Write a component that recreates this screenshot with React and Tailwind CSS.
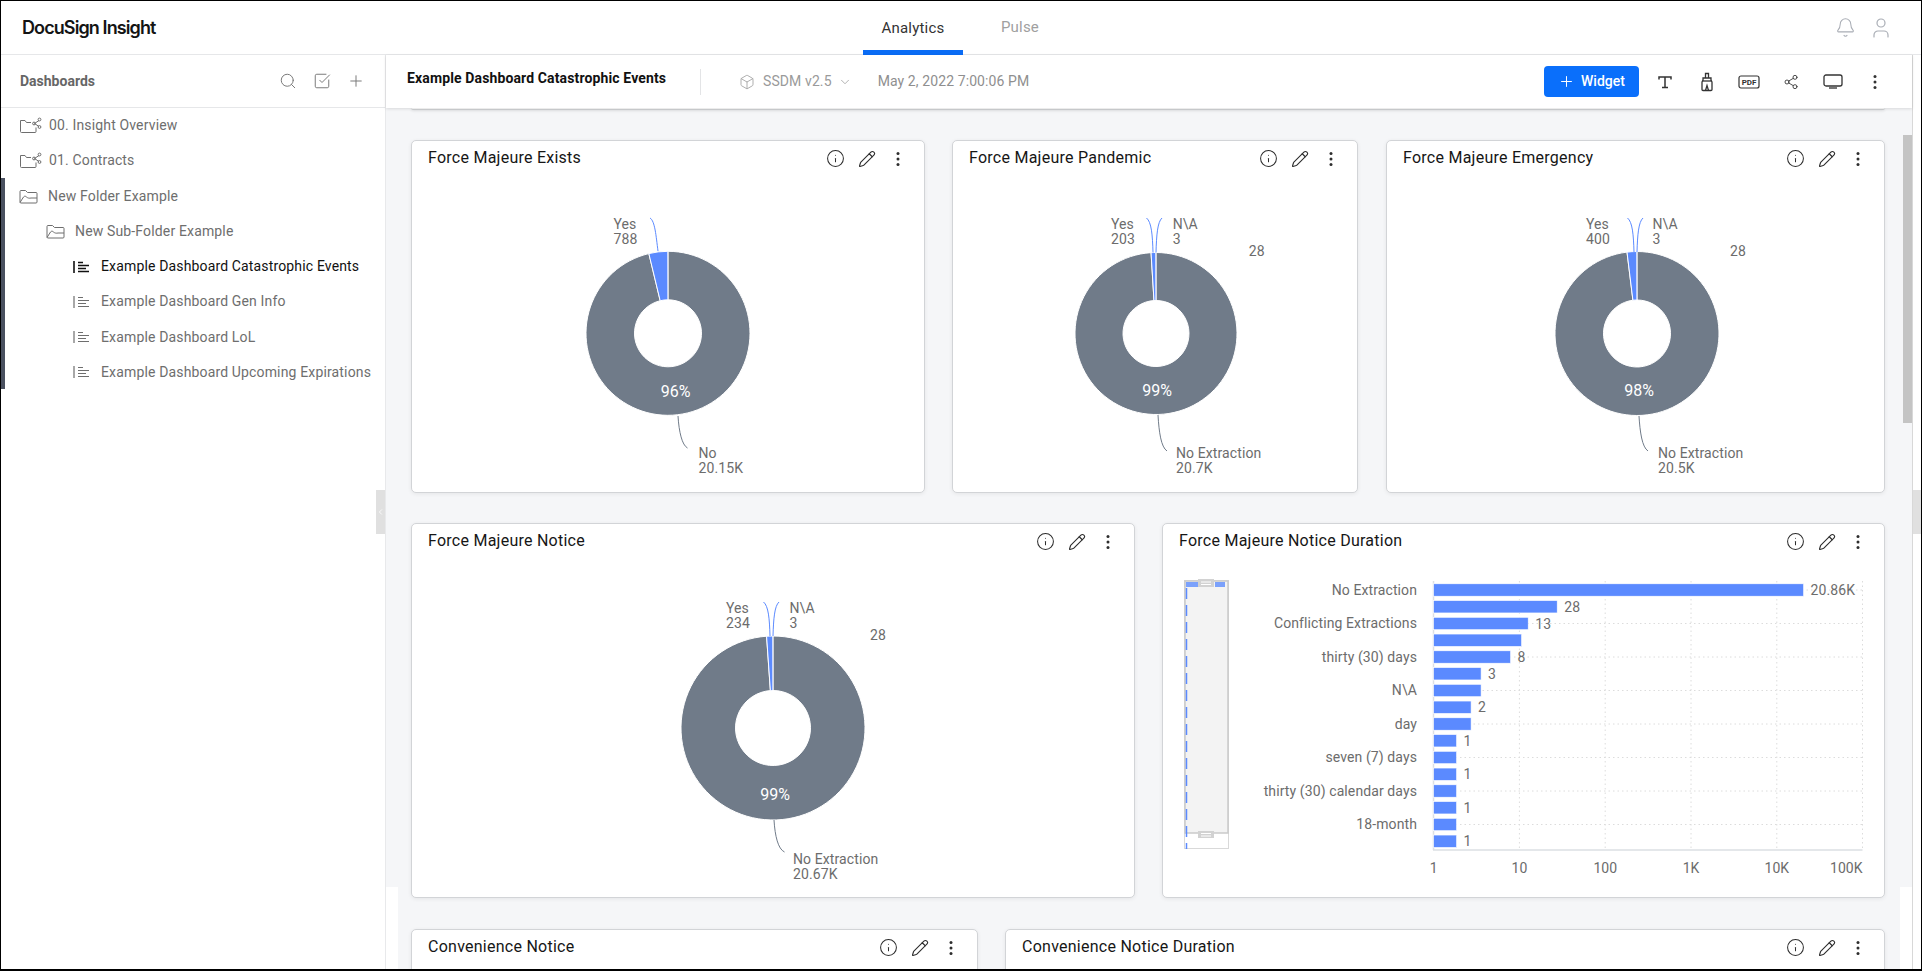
import { Bell, User, Search, SquareCheckBig, Plus, Info, Pencil, Share2, Box, ChevronDown, ChevronLeft } from "lucide-react";
import clsx from "clsx";

const BLUE = "#5b8aff";
const SLATE = "#707b89";

const TREE = [
  { label: "00. Insight Overview", icon: "shared", indent: 18 },
  { label: "01. Contracts", icon: "shared", indent: 18 },
  { label: "New Folder Example", icon: "folder", indent: 18 },
  { label: "New Sub-Folder Example", icon: "folder", indent: 45 },
  { label: "Example Dashboard Catastrophic Events", icon: "dash", indent: 72, active: true },
  { label: "Example Dashboard Gen Info", icon: "dash", indent: 72 },
  { label: "Example Dashboard LoL", icon: "dash", indent: 72 },
  { label: "Example Dashboard Upcoming Expirations", icon: "dash", indent: 72 },
];

const BARS = [
  { w: 370, label: "No Extraction", value: "20.86K" },
  { w: 123.6, value: "28" },
  { w: 94.6, label: "Conflicting Extractions", value: "13" },
  { w: 88 },
  { w: 77, label: "thirty (30) days", value: "8" },
  { w: 47.5, value: "3" },
  { w: 47.5, label: "N\\A" },
  { w: 37.5, value: "2" },
  { w: 37.5, label: "day" },
  { w: 23, value: "1" },
  { w: 23, label: "seven (7) days" },
  { w: 23, value: "1" },
  { w: 23, label: "thirty (30) calendar days" },
  { w: 23, value: "1" },
  { w: 23, label: "18-month" },
  { w: 23, value: "1" },
];

const TICKS = [
  { x: 1433.6, label: "1" },
  { x: 1519.4, label: "10" },
  { x: 1605.2, label: "100" },
  { x: 1691, label: "1K" },
  { x: 1776.8, label: "10K" },
  { x: 1862.5, label: "100K", anchor: "end" },
];

function SharedFolder() {
  return (
    <svg width="23" height="17" viewBox="0 0 23 17" fill="none" stroke="currentColor" strokeWidth="1">
      <path d="M12 5.5H7.5L6 3.5H1.5V14.5a1 1 0 0 0 1 1H16a1 1 0 0 0 1-1V10.5" />
      <path d="M15.5 6.5L20 3.5M15.5 6.5L20 9.5" />
      <circle cx="20.5" cy="2.5" r="1.4" />
      <circle cx="15" cy="6.5" r="1.4" />
      <circle cx="20.5" cy="10" r="1.4" />
    </svg>
  );
}

function FolderOpen() {
  return (
    <svg width="20" height="15" viewBox="0 0 20 15" fill="none" stroke="currentColor" strokeWidth="1">
      <path d="M1 13V2.5a1 1 0 0 1 1-1h4.5l2 2H17a1 1 0 0 1 1 1V13a1 1 0 0 1-1 1H2a1 1 0 0 1-1-1z" />
      <path d="M1 13.5l3.5-5.5c1-1.2 2-1 3 0s3 1.5 4.5 1H18" />
    </svg>
  );
}

function DashIcon({ active }) {
  return (
    <svg width="17" height="14" viewBox="0 0 17 14" fill="none" stroke="currentColor" strokeWidth={active ? 1.4 : 1}>
      <path d="M1 1v12" strokeWidth={active ? 1.6 : 1.2} />
      <path d="M5 2.5h5M5 5.5h11M5 8.5h8M5 11.5h11" />
    </svg>
  );
}

function Dots() {
  return (
    <svg width="18" height="18" viewBox="0 0 18 18" fill="currentColor">
      <circle cx="9" cy="3.5" r="1.5" />
      <circle cx="9" cy="9" r="1.5" />
      <circle cx="9" cy="14.5" r="1.5" />
    </svg>
  );
}

function TextIcon() {
  return (
    <svg width="16" height="14" viewBox="0 0 16 14" fill="none" stroke="currentColor" strokeWidth="1.5">
      <path d="M2 4.5V2h12v2.5M8 2v10.5M5 12.5h6" />
    </svg>
  );
}

function BrushIcon() {
  return (
    <svg width="14" height="20" viewBox="0 0 14 20" fill="none" stroke="currentColor" strokeWidth="1.3">
      <path d="M5.5 6V1.5h3V6" />
      <path d="M3 6h8v2.5a2 2 0 0 1 1 1.7v7.3a1 1 0 0 1-1 1H3a1 1 0 0 1-1-1v-7.3a2 2 0 0 1 1-1.7z" fill="none" />
      <path d="M2 9h10" />
      <path d="M5.5 18.5l1.5-5 1.5 5" />
    </svg>
  );
}

function PdfIcon() {
  return (
    <svg width="22" height="14" viewBox="0 0 22 14" fill="none">
      <rect x="1" y="1" width="20" height="12" rx="2" stroke="currentColor" strokeWidth="1.2" />
      <text x="11" y="10" textAnchor="middle" fill="currentColor" stroke="none" className="text-[8px] font-bold">PDF</text>
    </svg>
  );
}

function MonitorIcon() {
  return (
    <svg width="20" height="16" viewBox="0 0 20 16" fill="none" stroke="currentColor">
      <rect x="1" y="1" width="18" height="11" rx="2" strokeWidth="1.3" />
      <path d="M6 14h8" strokeWidth="2" stroke="#777" />
    </svg>
  );
}

function sector(cx, cy, R, r, a0, a1) {
  const pt = (rad, a) => {
    const t = ((a - 90) * Math.PI) / 180;
    return `${cx + rad * Math.cos(t)} ${cy + rad * Math.sin(t)}`;
  };
  const large = a1 - a0 > 180 ? 1 : 0;
  return `M${pt(R, a0)}A${R} ${R} 0 ${large} 1 ${pt(R, a1)}L${pt(r, a1)}A${r} ${r} 0 ${large} 0 ${pt(r, a0)}Z`;
}

function ChartLabel({ x, y, lines }) {
  return (
    <text x={x} y={y} className="fill-[#6c6c6c] text-[14px] tracking-[0.1px]">
      {lines.map((l, i) => (
        <tspan key={l} x={x} dy={i === 0 ? 0 : 15}>{l}</tspan>
      ))}
    </text>
  );
}

function Donut({ box, d }) {
  const { cx, cy, R, r, a } = d;
  return (
    <svg className="block" width={box.w} height={box.h} viewBox={`${box.x} ${box.y} ${box.w} ${box.h}`}>
      <path d={sector(cx, cy, R, r, 0, 360 - a)} fill={SLATE} stroke="#fff" strokeWidth="1" />
      <path d={sector(cx, cy, R, r, 360 - a, 359.9)} fill={BLUE} stroke="#fff" strokeWidth="1" />
      {d.leaders.map((l) => (
        <path key={l.d} d={l.d} fill="none" stroke={l.c} strokeWidth="1" />
      ))}
      {d.labels.map((l) => (
        <ChartLabel key={l.lines[0]} x={l.x} y={l.y} lines={l.lines} />
      ))}
      <text x={d.pct.x} y={d.pct.y} textAnchor="middle" className="fill-white text-[16px]">{d.pct.t}</text>
    </svg>
  );
}

function BarChart({ box }) {
  return (
    <svg className="block" width={box.w} height={box.h} viewBox={`${box.x} ${box.y} ${box.w} ${box.h}`}>
      {/* range slider */}
      <rect x="1184.5" y="580.5" width="44" height="268" fill="#fff" stroke="#d9d9d9" />
      <rect x="1185" y="581" width="43" height="252" fill="#f3f3f3" stroke="#cacaca" strokeWidth="1.5" />
      <path d="M1186.5 588V849" stroke={BLUE} strokeWidth="1.5" strokeDasharray="11 6" fill="none" />
      <rect x="1186" y="582" width="12" height="5" fill="#7ba1fb" />
      <rect x="1215" y="582" width="10" height="5" fill="#7ba1fb" />
      <rect x="1198" y="579" width="16" height="8" fill="#d2d2d2" />
      <path d="M1201 582h10M1201 584.5h10" stroke="#fff" fill="none" />
      <rect x="1198" y="831" width="16" height="7" fill="#d2d2d2" />
      <path d="M1201 833.5h10M1201 836h10" stroke="#fff" fill="none" />

      {/* grid */}
      {TICKS.slice(1).map((t) => (
        <path key={t.label} d={`M${t.x} 581V850`} stroke="#dcdcdc" strokeDasharray="1.5 3" fill="none" />
      ))}
      {BARS.map((b, i) =>
        b.label ? (
          <path key={b.label} d={`M1433 ${590 + i * 16.75}H1862`} stroke="#dcdcdc" strokeDasharray="1.5 3" fill="none" />
        ) : null,
      )}
      <path d="M1433.5 581V850M1433 850H1862.5" stroke="#dcdfe4" strokeWidth="1.5" fill="none" />

      {BARS.map((b, i) => {
        const cy = 590 + i * 16.75;
        return (
          <g key={i}>
            <rect x="1433.6" y={cy - 6.2} width={b.w} height="12.4" fill={BLUE} stroke="#fff" strokeWidth="0.6" />
            {b.label && (
              <text x="1417" y={cy + 4.5} textAnchor="end" className="fill-[#6c6c6c] text-[14px] tracking-[0.1px]">{b.label}</text>
            )}
            {b.value && (
              <text x={1433.6 + b.w + 7} y={cy + 5} className="fill-[#6c6c6c] text-[14px] tracking-[0.1px]">{b.value}</text>
            )}
          </g>
        );
      })}
      {TICKS.map((t) => (
        <text key={t.label} x={t.x} y="873" textAnchor={t.anchor || "middle"} className="fill-[#6c6c6c] text-[14px]">{t.label}</text>
      ))}
    </svg>
  );
}

function Card({ title, w, h, className, children }) {
  return (
    <div
      className={clsx("shrink-0 bg-white border border-[#d2d4d7] rounded-[5px] shadow-[0_1px_4px_rgba(0,0,0,0.07)] overflow-hidden", className)}
      style={{ width: w, height: h }}
    >
      <div className="h-[36px] flex justify-between items-start pl-[16px] pr-[17px] pt-[7px]">
        <span className="text-[16px] leading-[20px] tracking-[0.25px] text-[#161616]">{title}</span>
        <div className="flex items-center gap-[13px] text-[#2e2e2e] mt-[1px]">
          <Info size={19} strokeWidth={1.3} />
          <Pencil size={18} strokeWidth={1.5} />
          <Dots />
        </div>
      </div>
      {children}
    </div>
  );
}

const twoLeaders = (x, top, bottom) => [
  { d: `M${x - 9.5} ${top}C${x - 4.5} ${top + 4} ${x - 3.5} ${top + 17} ${x - 3} ${bottom}`, c: BLUE },
  { d: `M${x + 6} ${top}C${x + 1.5} ${top + 4} ${x + 0.5} ${top + 17} ${x} ${bottom}`, c: BLUE },
];

export default function App() {
  return (
    <div className="w-[1922px] h-[971px] overflow-hidden bg-white border-t border-x border-b-2 border-black flex flex-col font-['Roboto',sans-serif]">
      <header className="h-[54px] shrink-0 flex border-b border-[#e6e7e9] bg-white">
        <div className="w-[862px] shrink-0 pl-[21px] flex items-center">
          <span className="font-['Inter',sans-serif] text-[18px] font-semibold tracking-[-0.9px] text-[#141414]">DocuSign Insight</span>
        </div>
        <div className="w-[100px] flex items-center justify-center border-b-[5px] border-[#0a6cf5] text-[15px] tracking-[0.2px] text-[#333] pt-[5px] h-[54px]">Analytics</div>
        <div className="ml-[7px] w-[100px] flex items-center justify-center text-[15px] tracking-[0.2px] text-[#a0a0a0]">Pulse</div>
        <div className="ml-auto flex items-center pr-[22px] text-[#a9adb5]">
          <span className="w-[36px] flex justify-center"><Bell size={21} strokeWidth={1.2} /></span>
          <span className="w-[36px] flex justify-center"><User size={24} strokeWidth={1.2} /></span>
        </div>
      </header>

      <div className="flex-1 flex min-h-0">
        <aside className="relative w-[385px] shrink-0 bg-white border-r border-[#e8e9eb]">
          <div className="h-[53px] flex items-center pl-[19px] pr-[20px] border-b border-[#e6e7e9]">
            <span className="flex-1 text-[14px] font-bold text-[#666]">Dashboards</span>
            <div className="flex items-center gap-[16px] text-[#777]">
              <Search size={18} strokeWidth={1.3} />
              <SquareCheckBig size={18} strokeWidth={1.3} />
              <Plus size={18} strokeWidth={1.3} />
            </div>
          </div>
          {TREE.map((t) => (
            <div
              key={t.label}
              className={t.active ? "h-[35.25px] flex items-center text-[14px] tracking-[0.15px] text-[#111]" : "h-[35.25px] flex items-center text-[14px] tracking-[0.15px] text-[#6e6e6e]"}
              style={{ paddingLeft: t.indent }}
            >
              <span className={t.icon === "shared" ? "w-[30px] shrink-0" : t.icon === "folder" ? "w-[29px] shrink-0" : "w-[28px] shrink-0"}>
                {t.icon === "shared" && <SharedFolder />}
                {t.icon === "folder" && <FolderOpen />}
                {t.icon === "dash" && <DashIcon active={t.active} />}
              </span>
              {t.label}
            </div>
          ))}
          <div className="absolute left-0 top-[123px] w-[4px] h-[211px] bg-[#4a5160]" />
          <div className="absolute right-0 top-[435px] w-[9px] h-[44px] bg-[#e0e0e0] text-white flex items-center justify-center">
            <ChevronLeft size={12} strokeWidth={2} />
          </div>
        </aside>

        <main className="relative flex-1 min-w-0 flex flex-col bg-[#f5f6f8]">
          <div className="relative z-10 h-[53px] shrink-0 flex items-center bg-white shadow-[0_1px_3px_rgba(0,0,0,0.12)] pr-[16px]">
            <span className="ml-[21px] w-[260px] text-[14px] font-bold tracking-[0.13px] text-[#111] mb-[6px] whitespace-nowrap">Example Dashboard Catastrophic Events</span>
            <span className="ml-[33px] w-px h-[26px] bg-[#e3e4e6]" />
            <span className="ml-[38px] text-[#9a9a9a]"><Box size={16} strokeWidth={1.2} /></span>
            <span className="ml-[8px] text-[14px] text-[#9a9a9a] tracking-[0.1px]">SSDM v2.5</span>
            <span className="ml-[6px] text-[#9a9a9a]"><ChevronDown size={14} strokeWidth={1.3} /></span>
            <span className="ml-[26px] text-[14px] tracking-[0.1px] text-[#8f8f8f]">May 2, 2022 7:00:06 PM</span>
            <button type="button" className="ml-auto w-[95px] h-[31px] rounded-[4px] bg-[#0a6ffb] text-white text-[14px] font-medium flex items-center justify-center gap-[6px]">
              <Plus size={17} strokeWidth={1.4} />
              Widget
            </button>
            <div className="ml-[5px] flex items-center text-[#333]">
              <span className="w-[42px] flex justify-center"><TextIcon /></span>
              <span className="w-[42px] flex justify-center"><BrushIcon /></span>
              <span className="w-[42px] flex justify-center"><PdfIcon /></span>
              <span className="w-[42px] flex justify-center"><Share2 size={16} strokeWidth={1.3} /></span>
              <span className="w-[42px] flex justify-center"><MonitorIcon /></span>
              <span className="w-[42px] flex justify-center"><Dots /></span>
            </div>
          </div>

          <div className="flex-1 min-h-0 overflow-hidden pl-[25px]">
            <div className="h-[2px] w-[1474px] bg-white rounded-b-[5px] border-b border-[#cfd1d4] shadow-[0_1px_3px_rgba(0,0,0,0.1)]" />
            <div className="flex gap-[27px] mt-[30px]">
              <Card title="Force Majeure Exists" w={514} h={353}>
                <Donut
                  box={{ x: 412, y: 177, w: 512, h: 315 }}
                  d={{
                    cx: 668, cy: 333.3, R: 82, r: 33.5, a: 13.5,
                    leaders: [
                      { d: "M650 218C655 221 656 236 658 251", c: BLUE },
                      { d: "M678 416C679 432 682 445 687.5 448", c: SLATE },
                    ],
                    labels: [
                      { x: 613.5, y: 229, lines: ["Yes", "788"] },
                      { x: 698.5, y: 458, lines: ["No", "20.15K"] },
                    ],
                    pct: { x: 675.5, y: 397, t: "96%" },
                  }}
                />
              </Card>
              <Card title="Force Majeure Pandemic" w={406} h={353}>
                <Donut
                  box={{ x: 953, y: 177, w: 404, h: 315 }}
                  d={{
                    cx: 1156, cy: 333.5, R: 81, r: 33, a: 3.5,
                    leaders: [
                      ...twoLeaders(1156, 218, 252.5),
                      { d: "M1158 415C1159 432 1161 447 1167 451", c: SLATE },
                    ],
                    labels: [
                      { x: 1111, y: 229, lines: ["Yes", "203"] },
                      { x: 1172.7, y: 229, lines: ["N\\A", "3"] },
                      { x: 1248.7, y: 256, lines: ["28"] },
                      { x: 1176, y: 458, lines: ["No Extraction", "20.7K"] },
                    ],
                    pct: { x: 1157, y: 396, t: "99%" },
                  }}
                />
              </Card>
              <Card title="Force Majeure Emergency" w={499} h={353} className="ml-px">
                <Donut
                  box={{ x: 1387, y: 177, w: 497, h: 315 }}
                  d={{
                    cx: 1637, cy: 333.5, R: 82, r: 33.5, a: 7,
                    leaders: [
                      ...twoLeaders(1637, 218, 252),
                      { d: "M1639 416C1640 432 1642 447 1648 451", c: SLATE },
                    ],
                    labels: [
                      { x: 1586, y: 229, lines: ["Yes", "400"] },
                      { x: 1652.5, y: 229, lines: ["N\\A", "3"] },
                      { x: 1730, y: 256, lines: ["28"] },
                      { x: 1658, y: 458, lines: ["No Extraction", "20.5K"] },
                    ],
                    pct: { x: 1639, y: 396, t: "98%" },
                  }}
                />
              </Card>
            </div>

            <div className="flex gap-[27px] mt-[30px]">
              <Card title="Force Majeure Notice" w={724} h={375}>
                <Donut
                  box={{ x: 412, y: 560, w: 722, h: 337 }}
                  d={{
                    cx: 773, cy: 728, R: 92, r: 37.5, a: 4,
                    leaders: [
                      ...twoLeaders(773, 602, 636),
                      { d: "M774 820C775 836 778 849 784.5 852", c: SLATE },
                    ],
                    labels: [
                      { x: 726, y: 613, lines: ["Yes", "234"] },
                      { x: 789.5, y: 613, lines: ["N\\A", "3"] },
                      { x: 870, y: 640, lines: ["28"] },
                      { x: 793, y: 864, lines: ["No Extraction", "20.67K"] },
                    ],
                    pct: { x: 775, y: 800, t: "99%" },
                  }}
                />
              </Card>
              <Card title="Force Majeure Notice Duration" w={723} h={375}>
                <BarChart box={{ x: 1163, y: 560, w: 721, h: 337 }} />
              </Card>
            </div>

            <div className="flex gap-[27px] mt-[31px]">
              <Card title="Convenience Notice" w={567} h={300} />
              <Card title="Convenience Notice Duration" w={880} h={300} />
            </div>
          </div>

          <div className="absolute left-0 top-[832px] bottom-0 w-[12px] bg-white" />
          <div className="absolute right-0 top-[832px] bottom-0 w-[12px] bg-white" />
          <div className="absolute right-0 top-[80px] w-[9px] h-[288px] bg-[#c4c4c4]" />
        </main>

        <div className="relative w-[9px] shrink-0 bg-white border-l border-[#d8d8d8]">
          <div className="absolute left-0 right-0 top-[435px] h-[44px] bg-[#e0e0e0]" />
        </div>
      </div>
    </div>
  );
}
